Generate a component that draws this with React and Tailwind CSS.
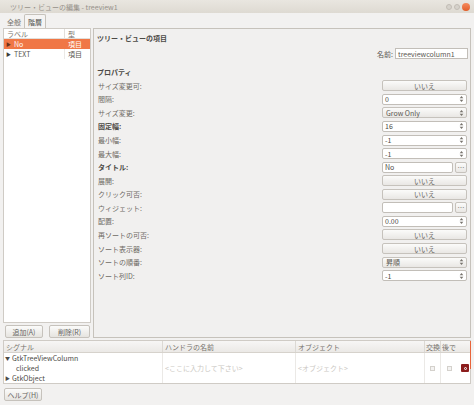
import React from "react";

const FONT = { fontFamily: '"Noto Sans CJK JP", "Noto Sans", sans-serif' };

const props = [
  { label: "サイズ変更可:", kind: "button", value: "いいえ" },
  { label: "間隔:", kind: "spin", value: "0" },
  { label: "サイズ変更:", kind: "combo", value: "Grow Only" },
  { label: "固定幅:", kind: "spin", value: "16", bold: true },
  { label: "最小幅:", kind: "spin", value: "-1" },
  { label: "最大幅:", kind: "spin", value: "-1" },
  { label: "タイトル:", kind: "entry", value: "No", bold: true },
  { label: "展開:", kind: "button", value: "いいえ" },
  { label: "クリック可否:", kind: "button", value: "いいえ" },
  { label: "ウィジェット:", kind: "entry", value: "" },
  { label: "配置:", kind: "spin", value: "0.00" },
  { label: "再ソートの可否:", kind: "button", value: "いいえ" },
  { label: "ソート表示器:", kind: "button", value: "いいえ" },
  { label: "ソートの順番:", kind: "combo", value: "昇順" },
  { label: "ソート列ID:", kind: "spin", value: "-1" },
];

const Arrows = () => (
  <svg width="5" height="8" viewBox="0 0 5 8" className="shrink-0">
    <path d="M2.5 1 L4.3 3.2 H0.7 Z" fill="#77736d" />
    <path d="M2.5 7 L4.3 4.8 H0.7 Z" fill="#77736d" />
  </svg>
);

function Control({ kind, value }) {
  if (kind === "button") {
    return (
      <div className="h-[11px] w-full rounded-[2px] border border-[#c6c2bc] bg-gradient-to-b from-[#fbfbfa] to-[#e9e7e4] flex items-center justify-center text-[#67645f]">
        {value}
      </div>
    );
  }
  if (kind === "combo") {
    return (
      <div className="h-[11px] w-full rounded-[2px] border border-[#c6c2bc] bg-gradient-to-b from-[#fbfbfa] to-[#e9e7e4] flex items-center pl-[3px] pr-[2px] text-[#5a5752]">
        <span className="flex-1">{value}</span>
        <Arrows />
      </div>
    );
  }
  if (kind === "entry") {
    return (
      <div className="h-[11px] w-full flex gap-[2px]">
        <div className="flex-1 rounded-[2px] border border-[#c2beb8] bg-white flex items-center pl-[2px] text-[#4c4a46]">
          {value}
        </div>
        <div className="w-[12px] rounded-[2px] border border-[#c6c2bc] bg-gradient-to-b from-[#fbfbfa] to-[#e9e7e4] flex items-center justify-center text-[#77736d] leading-none">
          …
        </div>
      </div>
    );
  }
  return (
    <div className="h-[11px] w-full rounded-[2px] border border-[#c2beb8] bg-white flex items-center pl-[2px] pr-[2px] text-[#4c4a46]">
      <span className="flex-1">{value}</span>
      <Arrows />
    </div>
  );
}

const Btn = ({ children, className }) => (
  <div
    className={
      "h-[12px] rounded-[2px] border border-[#c6c2bc] bg-gradient-to-b from-[#fbfbfa] to-[#e6e4e0] flex items-center justify-center text-[#67645f] " +
      (className || "")
    }
  >
    {children}
  </div>
);

export default function App() {
  return (
    <div
      className="w-[474px] h-[405px] bg-[#f2f1f0] flex flex-col text-[7px] leading-[10px] text-[#5a5752] overflow-hidden"
      style={FONT}
    >
      {/* title bar */}
      <div className="h-[13px] shrink-0 bg-gradient-to-b from-[#e9e6e0] to-[#dedad2] flex items-center pl-[10px] pr-[4px]">
        <span className="flex-1 text-[#96918a]">ツリー・ビューの編集 - treeview1</span>
        <div className="flex items-center gap-[2px]">
          <span className="w-[6px] h-[6px] rounded-full bg-[#d6d2cb] border border-[#c2bdb5]" />
          <span className="w-[6px] h-[6px] rounded-full bg-[#d6d2cb] border border-[#c2bdb5]" />
          <span className="w-[8px] h-[8px] rounded-full bg-gradient-to-b from-[#f58a5c] to-[#e25c26]" />
        </div>
      </div>

      {/* tabs */}
      <div className="h-[15px] shrink-0 flex items-end pl-[4px]">
        <div className="h-[12px] px-[3px] flex items-center text-[#77736d]">全般</div>
        <div className="h-[14px] px-[3px] flex items-center border border-b-0 border-[#c6c2bb] rounded-t-[2px] bg-[#f5f4f3] text-[#4c4a46]">
          階層
        </div>
      </div>

      {/* main */}
      <div className="h-[310px] shrink-0 flex pl-[3px]">
        <div className="w-[88px] flex flex-col">
          <div className="h-[295px] bg-white border border-[#cfcbc5] flex flex-col">
            <div className="h-[10px] flex border-b border-[#e2dfdb] text-[#77736d]">
              <span className="w-[61px] pl-[3px] border-r border-[#e2dfdb]">ラベル</span>
              <span className="pl-[3px]">型</span>
            </div>
            <div className="h-[10px] flex bg-[#f07746] text-white">
              <span className="w-[61px] pl-[2px] flex items-center gap-[3px]">
                <span className="text-[5px] text-[#6b3018]">▶</span>No
              </span>
              <span className="pl-[3px]">項目</span>
            </div>
            <div className="h-[10px] flex text-[#5a5752]">
              <span className="w-[61px] pl-[2px] flex items-center gap-[3px] border-r border-[#ebe9e6]">
                <span className="text-[5px] text-[#3c3b37]">▶</span>TEXT
              </span>
              <span className="pl-[3px]">項目</span>
            </div>
          </div>
          <div className="flex gap-[6px] pl-[2px] pt-[2px]">
            <Btn className="w-[38px] h-[13px]">追加(A)</Btn>
            <Btn className="w-[41px] h-[13px]">削除(R)</Btn>
          </div>
        </div>

        <div className="ml-[2px] w-[378px] h-[310px] border border-[#c6c2bb] bg-[#f1f0ef] flex flex-col pl-[3px] pr-[2px]">
          <div className="h-[10px] mt-[4px] font-bold text-[#4c4a46]">ツリー・ビューの項目</div>
          <div className="h-[11px] mt-[5px] flex items-center justify-end gap-[2px]">
            <span className="text-[#5a5752]">名前:</span>
            <div className="w-[73px] h-[11px] border border-[#c2beb8] bg-white pl-[2px] flex items-center text-[#5a5752]">
              treeviewcolumn1
            </div>
          </div>
          <div className="h-[10px] mt-[8px] font-bold text-[#4c4a46]">プロパティ</div>
          <div className="mt-[2px] flex flex-col">
            {props.map((p) => (
              <div key={p.label} className="h-[13.57px] flex items-center">
                <span
                  className={
                    "flex-1 pl-[1px] " +
                    (p.bold ? "font-bold text-[#4c4a46]" : "text-[#6e6a64]")
                  }
                >
                  {p.label}
                </span>
                <div className="w-[85px] mr-[1px]">
                  <Control kind={p.kind} value={p.value} />
                </div>
              </div>
            ))}
          </div>
        </div>
      </div>

      {/* signals */}
      <div className="mt-[2px] mx-[3px] h-[44px] shrink-0 border border-[#cfcbc5] bg-white flex flex-col relative">
        <div className="h-[12px] flex bg-gradient-to-b from-[#f7f6f5] to-[#ebe9e6] border-b border-[#d6d2cc] text-[#77736d]">
          <span className="w-[159px] pl-[2px] border-r border-[#dcd9d4] flex items-center">シグナル</span>
          <span className="w-[133px] pl-[2px] border-r border-[#dcd9d4] flex items-center">ハンドラの名前</span>
          <span className="w-[129px] pl-[2px] border-r border-[#dcd9d4] flex items-center">オブジェクト</span>
          <span className="w-[16px] pl-[1px] border-r border-[#dcd9d4] flex items-center">交換</span>
          <span className="w-[16px] pl-[1px] flex items-center">後で</span>
        </div>
        <div className="flex-1 flex">
          <div className="w-[159px] border-r border-[#ebe9e6] flex flex-col text-[#4c4a46]">
            <span className="h-[10px] flex items-center gap-[2px] pl-[1px]">
              <span className="text-[5px]">▼</span>GtkTreeViewColumn
            </span>
            <span className="h-[10px] pl-[12px]">clicked</span>
            <span className="h-[10px] flex items-center gap-[2px] pl-[1px]">
              <span className="text-[5px]">▶</span>GtkObject
            </span>
          </div>
          <div className="w-[133px] border-r border-[#ebe9e6] pl-[2px] flex items-center text-[#cbc8c3]">
            &lt;ここに入力して下さい&gt;
          </div>
          <div className="w-[129px] border-r border-[#ebe9e6] pl-[2px] flex items-center text-[#cbc8c3]">
            &lt;オブジェクト&gt;
          </div>
          <div className="w-[16px] border-r border-[#ebe9e6] flex items-center justify-center">
            <span className="w-[5px] h-[5px] border border-[#d4d1cc] bg-[#f4f3f2]" />
          </div>
          <div className="w-[16px] flex items-center justify-center">
            <span className="w-[5px] h-[5px] border border-[#d4d1cc] bg-[#f4f3f2]" />
          </div>
          <div className="flex-1 flex items-center justify-end pr-[1px]">
            <span className="w-[8px] h-[8px] rounded-[1px] bg-[#8c1d1d] flex items-center justify-center">
              <span className="w-[3px] h-[3px] rounded-full border border-white" />
            </span>
          </div>
        </div>
        <span className="absolute right-[-1px] top-0 w-[1px] h-[28px] bg-[#e8643a]" />
      </div>

      {/* help */}
      <div className="pl-[4px] pt-[4px]">
        <Btn className="w-[38px] h-[13px]">ヘルプ(H)</Btn>
      </div>
    </div>
  );
}
